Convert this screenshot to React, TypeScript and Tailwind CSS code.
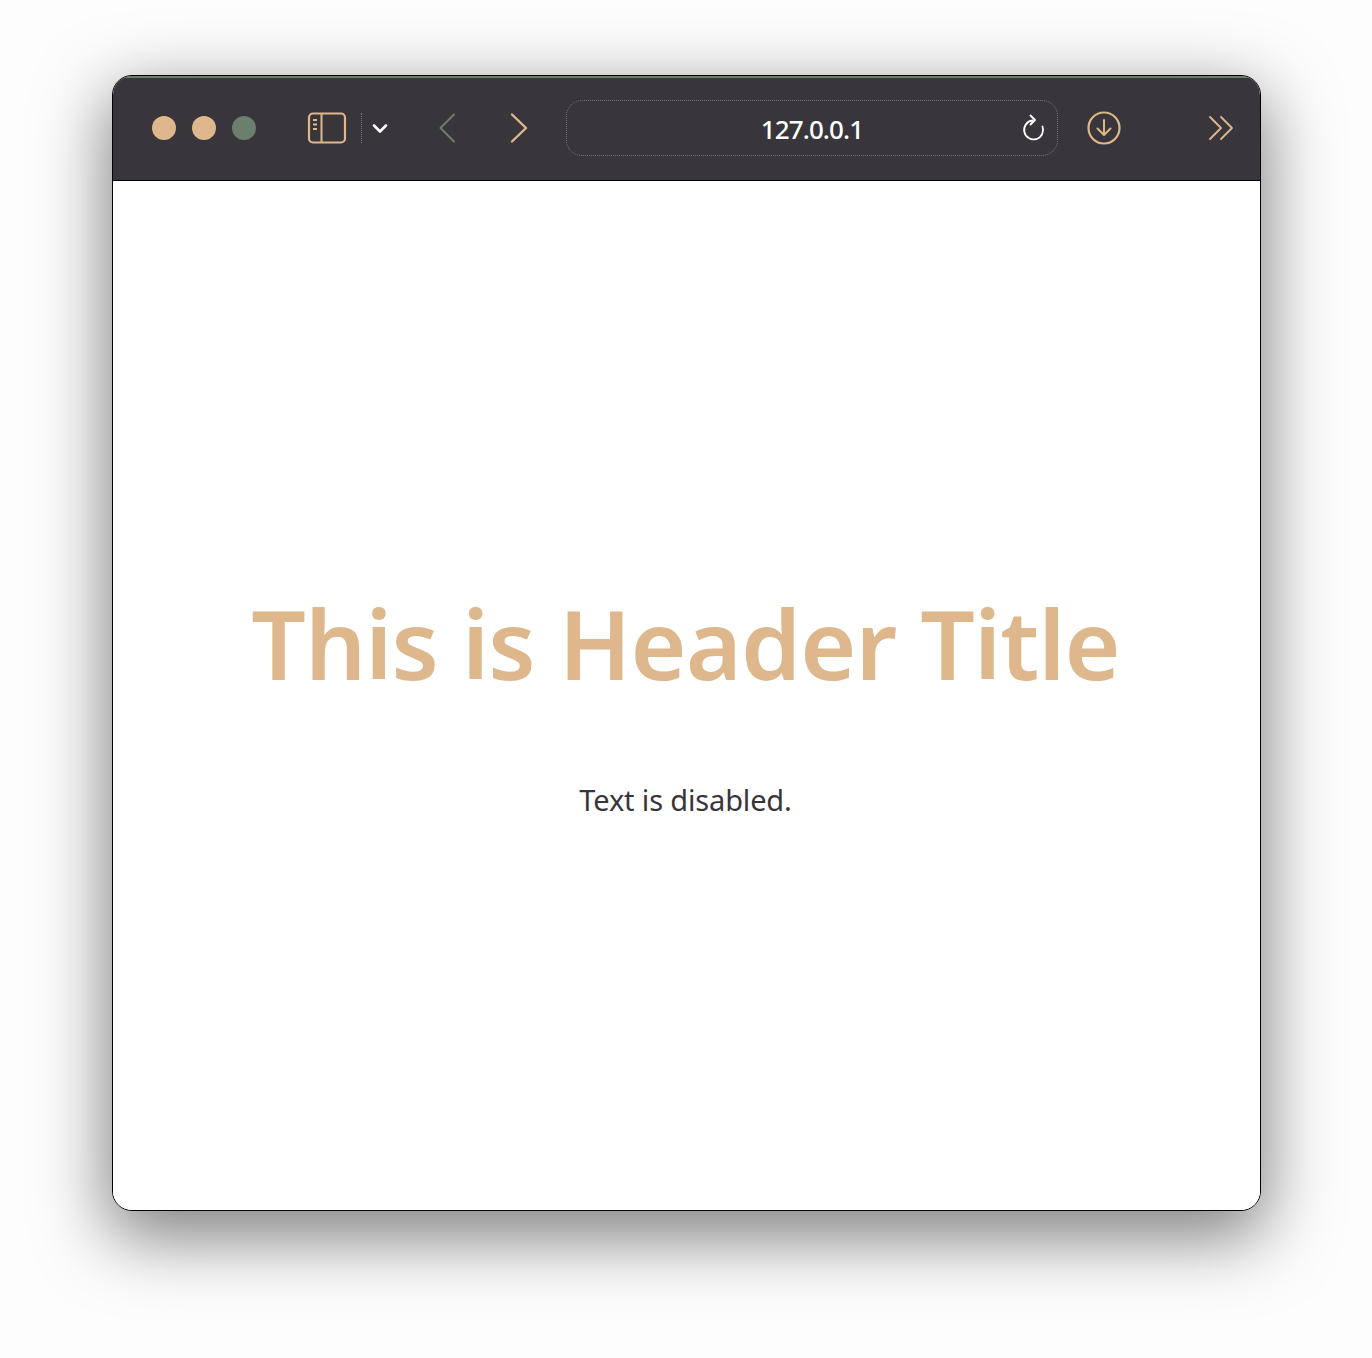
import React from 'react'

const tan = '#deb88c'

const App: React.FC = () => {
  return (
    <div className="w-[1372px] h-[1358px] bg-[#fdfdfd] pt-[75px] pl-[112px] overflow-hidden font-['Noto_Sans',sans-serif]">
      <div className="w-[1149px] h-[1136px] flex flex-col rounded-[20px] overflow-hidden bg-white border border-black shadow-[0_22px_70px_4px_rgba(0,0,0,0.5)]">
        {/* toolbar */}
        <div className="h-[105px] shrink-0 flex items-center bg-[#38363b] border-t-2 border-[#6b7f6e] border-b border-b-black">
          <div className="flex items-center gap-4 ml-[39px] mt-[-3px]">
            <span className="w-6 h-6 rounded-full bg-[#deb88c]" />
            <span className="w-6 h-6 rounded-full bg-[#deb88c]" />
            <span className="w-6 h-6 rounded-full bg-[#6b7f6e]" />
          </div>

          <svg className="ml-[51px] mt-[-3px]" width="40" height="32" viewBox="0 0 40 32" fill="none" stroke={tan}>
            <rect x="2" y="1.500" width="36" height="29" rx="4" strokeWidth="2.200" />
            <path d="M14.500 2v28" strokeWidth="2" />
            <path d="M6 8h4M6 12.500h4M6 17h4" strokeWidth="1.800" />
          </svg>
          <div className="ml-[14px] mt-[-3px] h-[30px] border-l border-dotted border-[#6b7f6e]" />
          <svg className="ml-[10px] mt-[-2px]" width="16" height="11" viewBox="0 0 16 11" fill="none" stroke="#fff" strokeWidth="2.600" strokeLinecap="round" strokeLinejoin="round">
            <path d="M2 2.500l6 6 6-6" />
          </svg>

          <svg className="ml-[50px] mt-[-3px]" width="20" height="30" viewBox="0 0 20 30" fill="none" stroke="#6b7f6e" strokeWidth="2" strokeLinecap="round" strokeLinejoin="round">
            <path d="M16 1.500L2.500 15 16 28.500" />
          </svg>
          <svg className="ml-[51px] mt-[-3px]" width="20" height="30" viewBox="0 0 20 30" fill="none" stroke={tan} strokeWidth="2.400" strokeLinecap="round" strokeLinejoin="round">
            <path d="M3 1.500L17 15 3 28.500" />
          </svg>

          {/* address bar */}
          <div className="relative ml-[37px] mt-[-3px] w-[492px] h-[56px] flex items-center justify-center rounded-[16px] border border-dotted border-[#6f7a72] text-white text-[26px] leading-[56px] font-medium tracking-[-0.9px]">
            <span className="mt-[3px]">127.0.0.1</span>
            <svg className="absolute right-[10px] top-[13px]" width="26" height="28" viewBox="0 0 26 28" fill="none" stroke="#fff" strokeWidth="1.800" strokeLinecap="round" strokeLinejoin="round">
              <path d="M11.500 6.500a9.500 9.500 0 1 0 10 6" />
              <path d="M9.500 1.500L14 6l-4.500 4.500" />
            </svg>
          </div>

          <svg className="ml-[29px] mt-[-3px]" width="34" height="34" viewBox="0 0 34 34" fill="none" stroke={tan} strokeLinecap="round" strokeLinejoin="round">
            <circle cx="17" cy="17" r="15.500" strokeWidth="2.200" />
            <path d="M17 9v15M10.500 17.500L17 24l6.500-6.500" strokeWidth="2" />
          </svg>

          <svg className="ml-[87px] mt-[-2px]" width="28" height="26" viewBox="0 0 28 26" fill="none" stroke={tan} strokeWidth="1.800" strokeLinecap="round" strokeLinejoin="round">
            <path d="M2 2l11 11L2 24M13 2l11 11-11 11" />
          </svg>
        </div>

        {/* page */}
        <div className="flex-1 flex flex-col items-center bg-white pr-[2px]">
          <h1 className="mt-[397px] text-[96px] leading-[130px] font-semibold tracking-[-0.9px] text-[#deb88c]">This is Header Title</h1>
          <p className="mt-[71px] text-[29px] leading-[42px] tracking-[-0.15px] text-[#38363b]">Text is disabled.</p>
        </div>
      </div>
    </div>
  )
}

export default App
